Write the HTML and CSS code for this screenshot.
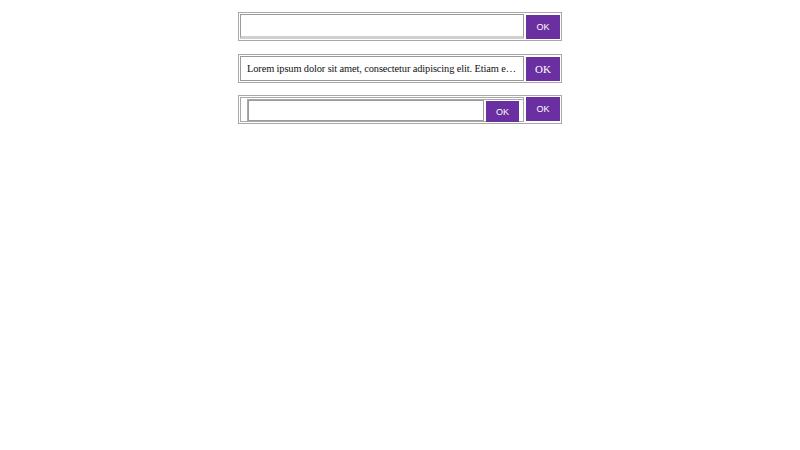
FILE: index.html
```html
<!DOCTYPE html>
<html>
<head>
<meta charset="utf-8">
<link rel="stylesheet" href="styles.css">
</head>
<body>
<div class="stack">
  <div class="bar bar-first">
    <div class="field"></div>
    <button class="btn btn-sans">OK</button>
  </div>
  <div class="bar">
    <div class="field field-text">Lorem ipsum dolor sit amet, consectetur adipiscing elit. Etiam euismod nibh vel lorem</div>
    <button class="btn btn-serif">OK</button>
  </div>
  <div class="bar">
    <div class="nested">
      <div class="nested-inner">
        <div class="field field-inner"></div>
        <button class="btn btn-sans btn-inner">OK</button>
      </div>
    </div>
    <button class="btn btn-sans btn-outer3">OK</button>
  </div>
</div>
</body>
</html>
```
FILE: styles.css
```css
html, body { margin: 0; padding: 0; background: #fff; }
.stack {
  display: flex;
  flex-direction: column;
  align-items: center;
  gap: 12px;
  padding-top: 12px;
}
.bar {
  width: 320px;
  height: 25px;
  border: 1px solid #a8a8a8;
  padding: 1px;
  box-sizing: content-box;
  display: flex;
  gap: 2px;
}
.bar-first { margin-bottom: 1px; }
.field {
  flex: 1;
  min-width: 0;
  border: 1px solid #9a9a9a;
  border-bottom: 3px solid #d0d0d0;
  background: #fff;
  box-sizing: border-box;
  height: 25px;
}
.field-text {
  font-family: "Liberation Serif", serif;
  font-size: 10.4px;
  letter-spacing: -0.12px;
  line-height: 23px;
  padding: 0 6px;
  white-space: nowrap;
  overflow: hidden;
  text-overflow: ellipsis;
  color: #111;
  border-bottom: 1px solid #9a9a9a;
}
.btn {
  width: 34px;
  height: 24px;
  margin: 1px 0 0;
  border: none;
  background: #6a2fa0;
  color: #fff;
  padding: 0;
  flex: none;
}
.btn-sans {
  font-family: "Liberation Sans", sans-serif;
  font-size: 9px;
}
.btn-serif {
  font-family: "Liberation Serif", serif;
  font-size: 11px;
}
.nested {
  flex: 1;
  min-width: 0;
  border: 1px solid #a8a8a8;
  padding: 1px 0 0 6px;
  box-sizing: border-box;
  display: flex;
}
.nested-inner {
  flex: 1;
  min-width: 0;
  border-left: 1px solid #a8a8a8;
  border-top: 1px solid #a8a8a8;
  padding: 0 4px 0 0;
  display: flex;
  gap: 2px;
}
.field-inner {
  height: 21px;
  border-bottom: 1px solid #9a9a9a;
  margin-top: 0;
}
.btn-inner {
  margin: 1px 0 0;
  height: 21px;
  width: 33px;
}
.btn-outer3 {
  margin: 0 0 1px;
}
```
